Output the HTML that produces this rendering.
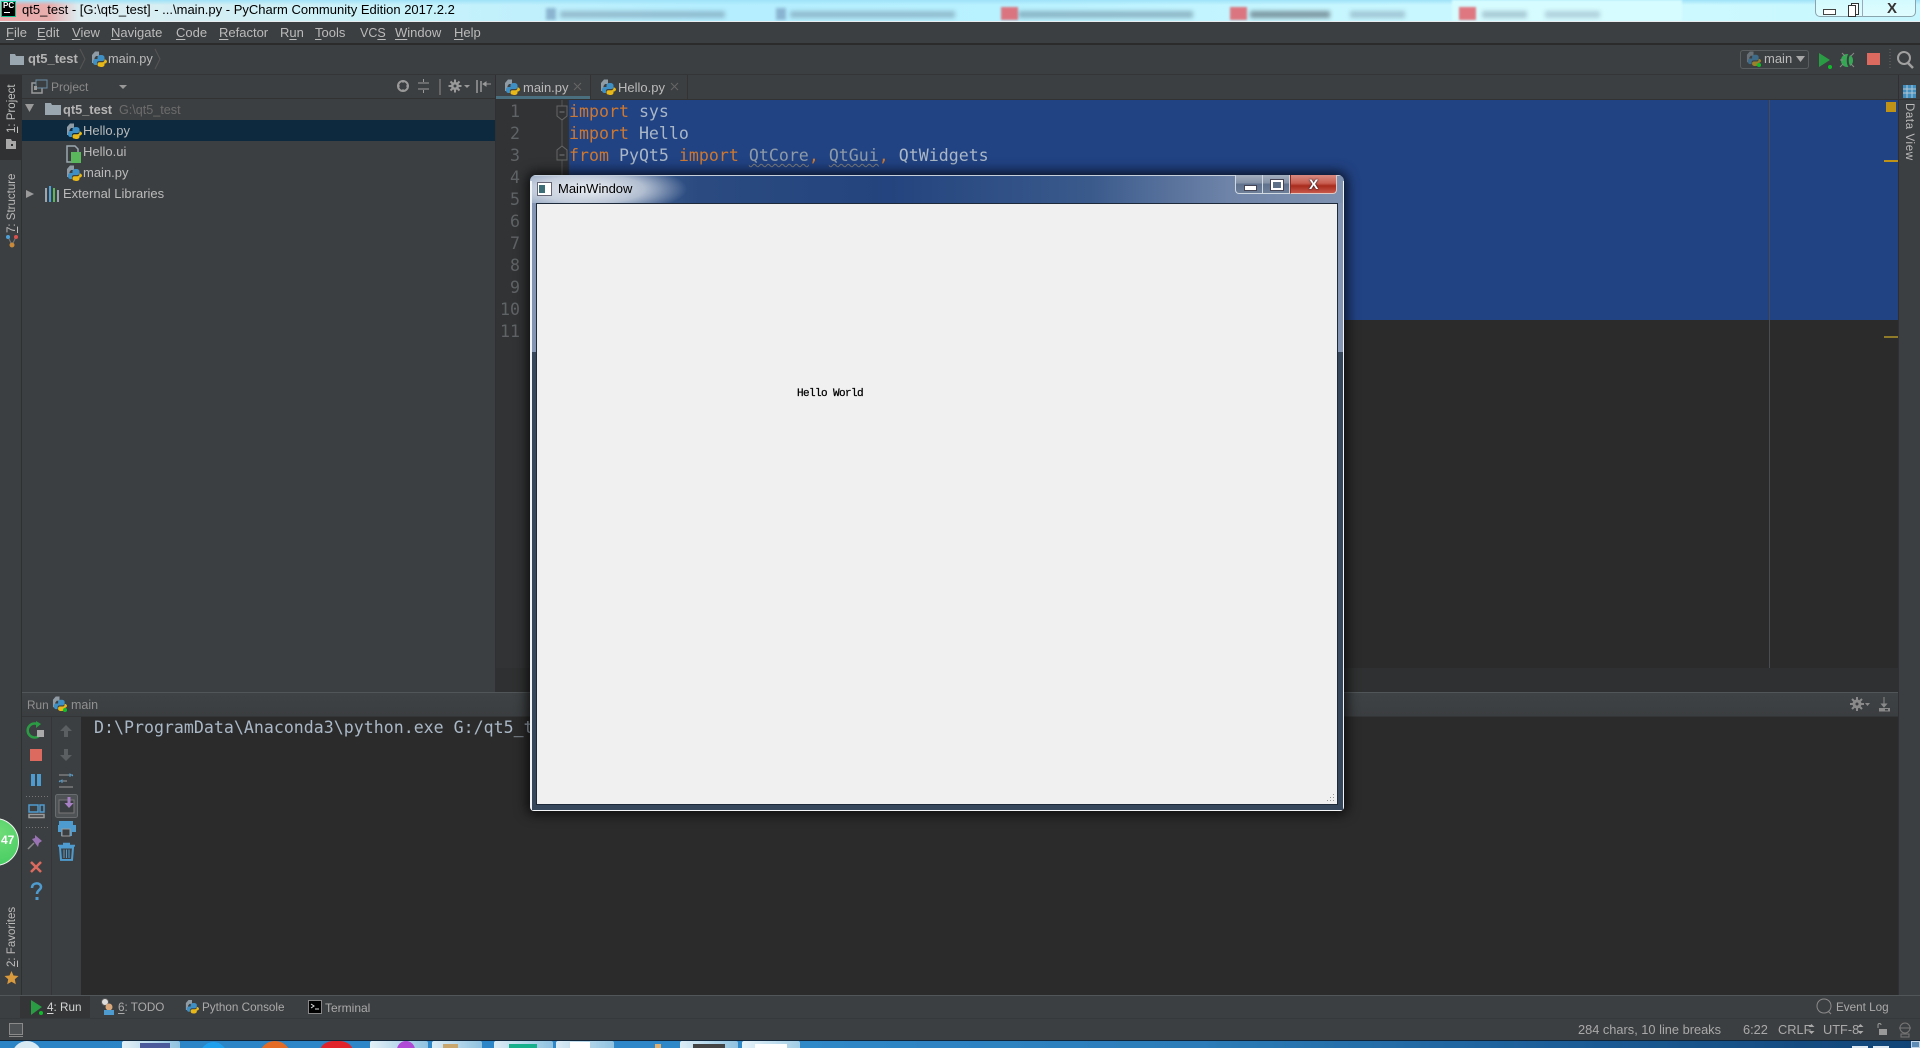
<!DOCTYPE html>
<html><head><meta charset="utf-8"><title>PyCharm</title>
<style>
html,body{margin:0;padding:0;width:1920px;height:1048px;overflow:hidden;background:#3c3f41}
.a,.t{position:absolute}
.t{white-space:pre;font-family:"Liberation Sans",sans-serif;font-size:13px;line-height:16px;color:#bbb}
.m{font-family:"DejaVu Sans Mono","Liberation Mono",monospace;font-size:16.6px;line-height:22px;color:#a9b7c6}
.k{color:#cc7832}
u{text-underline-offset:2px}
.wav{text-decoration:underline wavy #808080 1px;text-underline-offset:2px;color:#8d9aa8}
svg{position:absolute;overflow:visible}
.v{transform-origin:0 0;transform:rotate(-90deg)}
.v2{transform-origin:0 0;transform:rotate(90deg)}
</style></head>
<body>
<svg width="0" height="0" style="position:absolute">
<defs>
<symbol id="py" viewBox="0 0 16 16" overflow="visible">
<path d="M1 4 4 0.5H8V5H5L3.5 7V12H1Z" fill="#8f9ba5"/>
<path d="M10 4c-2.500 0-3.500 1-3.500 2.500V8H4.500C3 8 2 9.200 2 11s1 3 2.500 3H6v-2c0-1.200 .8-2 2-2h3.500c1.200 0 2-.8 2-2V6.500C13.500 5 12.300 4 10 4z" fill="#3e8fc4"/>
<path d="M14 8.500h-0.500V9c0 1.500-1 2.200-2.200 2.200H8.500C7.300 11.200 6.500 12 6.500 13v.8C6.500 15.300 8 16 10 16c2.500 0 3.500-1 3.500-2.300V12.500h.5c1.300 0 2-1.500 2-2s-.7-2-2-2z" fill="#e8b818"/>
</symbol>
</defs>
</svg>

<!-- Aero title strip -->
<div class="a" style="left:0;top:0;width:1920px;height:21px;background:linear-gradient(90deg,#e9a9a8 0,#e8aeae 50px,#dcecf0 78px,#c8f2fa 400px,#b4eeff 700px,#b8f1ff 1000px,#c6f6ff 1300px,#ccf9ff 1700px,#c8f6ff 1920px);overflow:hidden">
  <div class="a" style="left:0;top:0;width:1920px;height:5px;background:linear-gradient(#9fe2f8,rgba(170,235,255,0))"></div>
  <div class="a" style="left:1452px;top:0;width:230px;height:21px;background:#d6fcff;filter:blur(1px)"></div>
  <div class="a" style="left:560px;top:11px;width:165px;height:7px;background:#6b8aa0;filter:blur(2.500px);opacity:.5"></div>
  <div class="a" style="left:790px;top:11px;width:165px;height:7px;background:#6b8aa0;filter:blur(2.500px);opacity:.5"></div>
  <div class="a" style="left:1018px;top:11px;width:175px;height:7px;background:#5c7a8e;filter:blur(2.500px);opacity:.5"></div>
  <div class="a" style="left:1250px;top:11px;width:80px;height:7px;background:#54646f;filter:blur(2.500px);opacity:.65"></div>
  <div class="a" style="left:1350px;top:11px;width:55px;height:7px;background:#7a98ab;filter:blur(2.500px);opacity:.5"></div>
  <div class="a" style="left:1482px;top:11px;width:45px;height:7px;background:#7a98ab;filter:blur(2.500px);opacity:.5"></div>
  <div class="a" style="left:1545px;top:11px;width:55px;height:7px;background:#8aa8bb;filter:blur(2.500px);opacity:.5"></div>
  <div class="a" style="left:1001px;top:7px;width:17px;height:13px;background:#e0606a;filter:blur(1px);opacity:.85"></div>
  <div class="a" style="left:1230px;top:7px;width:17px;height:13px;background:#e0606a;filter:blur(1px);opacity:.85"></div>
  <div class="a" style="left:1459px;top:7px;width:17px;height:13px;background:#e0606a;filter:blur(1px);opacity:.85"></div>
  <div class="a" style="left:546px;top:8px;width:10px;height:12px;background:#7fa6c6;filter:blur(1.500px);opacity:.8"></div>
  <div class="a" style="left:776px;top:8px;width:10px;height:12px;background:#7fa6c6;filter:blur(1.500px);opacity:.8"></div>
  <div class="a" style="left:1815px;top:-2px;width:101px;height:19px;border:1px solid #8aa4ad;border-radius:0 0 5px 5px;box-sizing:border-box;background:linear-gradient(#d2fbff,#e0fcff)"></div>
  <div class="a" style="left:1862px;top:0;width:1px;height:17px;background:#9ab"></div>
</div>
<div class="a" style="left:0;top:21px;width:1920px;height:1px;background:#e8eef0"></div>
<div class="a" style="left:1823px;top:9px;width:11px;height:4px;background:#fff;border:1px solid #444"></div>
<div class="a" style="left:1851px;top:3px;width:6px;height:10px;background:#fff;border:1px solid #333"></div>
<div class="a" style="left:1848px;top:5px;width:6px;height:10px;background:#fff;border:1px solid #333"></div>
<div class="t" style="left:1887px;top:1px;font-weight:bold;font-size:15px;color:#333;text-shadow:0 0 1px #fff">X</div>

<!-- PC logo -->
<div class="a" style="left:1px;top:1px;width:15px;height:16px;background:#000;border:1px solid #12c492;box-sizing:border-box"></div>
<div class="t" style="left:3px;top:1px;font-size:8px;line-height:10px;font-weight:bold;color:#fff">PC</div>
<div class="a" style="left:4px;top:12px;width:6px;height:1px;background:#fff"></div>
<div class="t" style="left:22px;top:2px;color:#000;font-size:13px">qt5_test - [G:\qt5_test] - ...\main.py - PyCharm Community Edition 2017.2.2</div>

<!-- Menu -->
<div class="a" style="left:0;top:43px;width:1920px;height:2px;background:#2b2b2b"></div>
<div class="t" style="left:6px;top:25px"><u>F</u>ile</div>
<div class="t" style="left:37px;top:25px"><u>E</u>dit</div>
<div class="t" style="left:72px;top:25px"><u>V</u>iew</div>
<div class="t" style="left:111px;top:25px"><u>N</u>avigate</div>
<div class="t" style="left:176px;top:25px"><u>C</u>ode</div>
<div class="t" style="left:219px;top:25px"><u>R</u>efactor</div>
<div class="t" style="left:280px;top:25px">R<u>u</u>n</div>
<div class="t" style="left:315px;top:25px"><u>T</u>ools</div>
<div class="t" style="left:360px;top:25px;font-size:12.500px">VC<u>S</u></div>
<div class="t" style="left:395px;top:25px"><u>W</u>indow</div>
<div class="t" style="left:454px;top:25px"><u>H</u>elp</div>

<!-- Breadcrumb -->
<div class="a" style="left:0;top:74px;width:1920px;height:1px;background:#333536"></div>
<svg style="left:0;top:45px" width="200" height="29">
<path d="M10 9h5l1 2h8v9H10z" fill="#9aa7b0"/>
<path d="M80 4l5 10-5 10M155 4l5 10-5 10" fill="none" stroke="#555" stroke-width="1"/>
<use href="#py" x="91" y="6" width="16" height="16"/>
</svg>
<div class="t" style="left:28px;top:51px;font-weight:bold;color:#b4b4b4">qt5_test</div>
<div class="t" style="left:108px;top:51px;font-size:12.800px">main.py</div>

<!-- Run toolbar top right -->
<div class="a" style="left:1740px;top:50px;width:69px;height:19px;border:1px solid #5a5d5f;border-radius:3px;box-sizing:border-box"></div>
<svg style="left:1740px;top:45px" width="180" height="29">
<use href="#py" x="6" y="6" width="15" height="15" opacity=".55"/>
<circle cx="19" cy="20" r="2" fill="#0fbd2b"/>
<path d="M56 11h9l-4.500 6z" fill="#a8a8a8"/>
<path d="M79 8l11 7-11 7z" fill="#2a9c43"/>
<circle cx="90" cy="22" r="2" fill="#0fbd2b"/>
<ellipse cx="107" cy="15.500" rx="6" ry="6.500" fill="#34a853"/>
<path d="M110 9c-3 2-3 11 0 13" fill="none" stroke="#3c3f41" stroke-width="2"/>
<path d="M102 8l3 3M114 8l-3 3M100 15h3M100 22l3-3M114 22l-3-3" stroke="#8a8a8a" stroke-width="1"/>
<rect x="127" y="8" width="13" height="12" fill="#dd6a5f"/>
<path d="M150 4v21" stroke="#666" stroke-dasharray="1 2"/>
<circle cx="164" cy="13" r="6" fill="none" stroke="#a0a0a0" stroke-width="2"/>
<path d="M168 18l5 5" stroke="#a0a0a0" stroke-width="2.500"/>
</svg>
<div class="t" style="left:1764px;top:51px">main</div>

<!-- Left stripe -->
<div class="a" style="left:21px;top:75px;width:1px;height:920px;background:#2e3031"></div>
<div class="a" style="left:0;top:75px;width:21px;height:85px;background:#2f3132"></div>
<div class="t v" style="left:4px;top:133px;font-size:11.500px;line-height:16px;color:#c0c0c0"><u>1</u>: Project</div>
<div class="t v" style="left:4px;top:233px;font-size:11.500px;line-height:16px"><u>7</u>: Structure</div>
<div class="t v" style="left:4px;top:967px;font-size:11.500px;line-height:16px"><u>2</u>: Favorites</div>
<svg style="left:0;top:0" width="22" height="1000">
<path d="M6 139h5l1 2h4v8H6z" fill="#a8a8a8"/><rect x="11" y="144" width="2" height="2" fill="#2f3132"/>
<path d="M8 237l4 8 4-8" fill="none" stroke="#777"/><circle cx="8" cy="237" r="2" fill="#4ea0d8"/><circle cx="16" cy="237" r="2" fill="#d8534f"/><circle cx="12" cy="245" r="2.500" fill="#c98a3b"/>
<path d="M11.500 971l2 4.500 5 .5-3.700 3.300 1 5-4.300-2.600-4.300 2.600 1-5L4.500 976l5-.5z" fill="#d99a3d"/>
</svg>

<!-- Project panel -->
<div class="a" style="left:22px;top:98px;width:474px;height:1px;background:#323232"></div>
<div class="a" style="left:495px;top:75px;width:1px;height:617px;background:#2e3031"></div>
<div class="a" style="left:22px;top:120px;width:473px;height:21px;background:#0d293e"></div>
<svg style="left:22px;top:75px" width="474" height="140">
<rect x="10" y="8" width="10" height="10" fill="none" stroke="#9a9a9a" stroke-width="1.500"/><rect x="14" y="5" width="11" height="8" fill="#3c3f41" stroke="#6a8ca8"/><rect x="12" y="11" width="3" height="4" fill="#9a9a9a"/>
<path d="M97 10h8l-4 4z" fill="#999"/>
<circle cx="381" cy="11" r="5" fill="none" stroke="#9a9a9a" stroke-width="2"/><path d="M381 5v3M381 14v3M375 11h3M384 11h3" stroke="#9a9a9a"/>
<path d="M396 8h11M396 14h11M401.500 4v3M401.500 18v-3" stroke="#9a9a9a" fill="none"/>
<path d="M418 4v16" stroke="#666" stroke-width="2"/>
<path d="M433 4.500v13M426.500 11h13M428.500 6.500l9 9M437.500 6.500l-9 9" stroke="#9a9a9a" stroke-width="2"/><circle cx="433" cy="11" r="4" fill="#9a9a9a"/><circle cx="433" cy="11" r="1.500" fill="#3c3f41"/>
<path d="M442 10h6l-3 3z" fill="#9a9a9a"/>
<path d="M455 5v13M459 6v11" stroke="#9a9a9a" stroke-width="1.500" fill="none"/><path d="M461 9h8M461 9l3-2v4z" stroke="#9a9a9a" fill="#9a9a9a"/>
<path d="M4 30h9l-4.500 8z" fill="#9a9a9a" transform="translate(-1 -1)"/>
<path d="M23 28h6l1 2h9v10H23z" fill="#9aa7b0"/>
<use href="#py" x="44" y="48" width="16" height="16"/>
<path d="M45 71h8l3 3v13H45z" fill="none" stroke="#9aa7b0" stroke-width="1.500"/>
<rect x="49" y="77" width="10" height="11" fill="#5bb75b"/>
<use href="#py" x="44" y="90" width="16" height="16"/>
<path d="M4 115l8 4-8 4z" fill="#9a9a9a"/>
<path d="M24 113v14M28 111v16M32 113v14M36 115v12" stroke-width="2" fill="none" stroke="#9aa7b0"/><path d="M28 111v16" stroke="#4ea0d8" stroke-width="2"/><path d="M32 113v14" stroke="#5bb75b" stroke-width="2"/>
</svg>
<div class="t" style="left:51px;top:79px;color:#8a8a8a;font-size:12px">Project</div>
<div class="t" style="left:63px;top:102px;font-weight:bold;color:#b4b4b4;font-size:12.800px">qt5_test</div>
<div class="t" style="left:119px;top:102px;color:#6c6c6c;font-size:12.600px">G:\qt5_test</div>
<div class="t" style="left:83px;top:123px">Hello.py</div>
<div class="t" style="left:83px;top:144px">Hello.ui</div>
<div class="t" style="left:83px;top:165px">main.py</div>
<div class="t" style="left:63px;top:186px">External Libraries</div>

<!-- Tabs -->
<div class="a" style="left:496px;top:75px;width:94px;height:24px;background:#3f4244;box-sizing:border-box;border-bottom:3px solid #4a7080"></div>
<div class="a" style="left:590px;top:75px;width:1px;height:24px;background:#333"></div>
<div class="a" style="left:687px;top:75px;width:1px;height:24px;background:#333"></div>
<div class="a" style="left:496px;top:99px;width:1424px;height:1px;background:#323232"></div>
<svg style="left:500px;top:78px" width="200" height="20">
<use href="#py" x="4" y="1" width="16" height="16"/>
<use href="#py" x="100" y="1" width="16" height="16"/>
<path d="M74 5l7 7M81 5l-7 7M171 5l7 7M178 5l-7 7" stroke="#666" stroke-width="1"/>
</svg>
<div class="t" style="left:523px;top:80px">main.py</div>
<div class="t" style="left:618px;top:80px">Hello.py</div>

<!-- Editor -->
<div class="a" style="left:496px;top:100px;width:73px;height:568px;background:#313335"></div>
<div class="a" style="left:569px;top:100px;width:1329px;height:568px;background:#2b2b2b"></div>
<div class="a" style="left:569px;top:100px;width:1329px;height:220px;background:#214283"></div>
<div class="a" style="left:1769px;top:100px;width:1px;height:568px;background:#4a4d50"></div>
<div class="a" style="left:496px;top:668px;width:1403px;height:24px;background:#2f3031"></div>
<div class="a" style="left:1898px;top:75px;width:1px;height:920px;background:#2e3031"></div>
<svg style="left:490px;top:100px" width="90" height="120">
<path d="M72 0v100" stroke="#555" stroke-width="1"/>
<path d="M67 6h10v10l-5 4-5-4z" fill="#313335" stroke="#666"/><path d="M69.500 12h5" stroke="#777"/>
<path d="M72 46l5 4v10H67V50z" fill="#313335" stroke="#666"/><path d="M69.500 55h5" stroke="#777"/>
</svg>
<div class="t m" style="left:490px;top:101px;width:30px;text-align:right;color:#606366">1
2
3
4
5
6
7
8
9
10
11</div>
<div class="t m" style="left:569px;top:101px"><span class="k">import</span> sys
<span class="k">import</span> Hello
<span class="k">from</span> PyQt5 <span class="k">import</span> <span class="wav">QtCore</span><span class="k">,</span> <span class="wav">QtGui</span><span class="k">,</span> QtWidgets</div>
<div class="a" style="left:1886px;top:102px;width:10px;height:10px;background:#be9117"></div>
<div class="a" style="left:1884px;top:160px;width:14px;height:2px;background:#be9117"></div>
<div class="a" style="left:1884px;top:336px;width:14px;height:2px;background:#8f7a2a"></div>

<!-- Right stripe -->
<svg style="left:1902px;top:85px" width="16" height="14">
<rect x="1" y="0" width="13" height="13" fill="#3f8fc0"/>
<path d="M1 4h13M1 8h13M5 0v13M10 0v13" stroke="#b5c5cf" stroke-width="1"/>
</svg>
<div class="t v2" style="left:1917px;top:103px;font-size:11.500px;line-height:16px;letter-spacing:.6px">Data View</div>

<!-- Run panel -->
<div class="a" style="left:22px;top:692px;width:1876px;height:1px;background:#515658"></div>
<div class="a" style="left:22px;top:693px;width:1876px;height:23px;background:linear-gradient(#3e4244,#3b3e40)"></div>
<div class="a" style="left:22px;top:716px;width:1876px;height:1px;background:#333536"></div>
<div class="a" style="left:22px;top:717px;width:59px;height:278px;background:#3c3f41"></div>
<div class="a" style="left:51px;top:717px;width:1px;height:278px;background:#333536"></div>
<div class="a" style="left:81px;top:717px;width:1817px;height:278px;background:#2b2b2b"></div>
<div class="t" style="left:27px;top:697px;color:#909090;font-size:11.800px">Run</div>
<div class="t" style="left:71px;top:697px;color:#909090;font-size:12.500px">main</div>
<svg style="left:0;top:690px" width="90" height="220">
<use href="#py" x="52" y="6" width="15" height="15"/><circle cx="65" cy="20" r="2" fill="#0fbd2b"/>
<path d="M42 35a7 7 0 1 0 0 11" fill="none" stroke="#2a9c43" stroke-width="2.500" transform="translate(-3 0)"/><path d="M36 31v7l5-4z" fill="#2a9c43"/>
<rect x="37" y="40" width="7" height="7" fill="#aaa"/>
<rect x="30" y="59" width="12" height="12" fill="#dd6a5f"/>
<path d="M31 84h4v12h-4zM37 84h4v12h-4z" fill="#4e9ccf"/>
<path d="M26 106.500h22" stroke="#777" stroke-dasharray="1 2"/>
<path d="M29 115h9v7h-9zM40 115h4v7h-4z" fill="none" stroke="#4e9ccf" stroke-width="1.500"/><path d="M29 124.500h15v3H29z" fill="none" stroke="#9a9a9a" stroke-width="1.500"/>
<path d="M26 137.500h22" stroke="#777" stroke-dasharray="1 2"/>
<path d="M35 145l7 6-3 2-1 4-6-8 3-1z" fill="#9a73b5"/><path d="M34 153l-6 6" stroke="#888" stroke-width="1.500"/>
<path d="M31 172l10 10M41 172l-10 10" stroke="#dd6a5f" stroke-width="2.500"/>
<path d="M32 198c0-6 9-6 9-1 0 3-4 3-4 7" fill="none" stroke="#4e9ccf" stroke-width="2.500"/><rect x="35.500" y="207" width="3" height="3" fill="#4e9ccf"/>
<path d="M66 35l6 6h-4v6h-4v-6h-4z" fill="#5c5f61"/>
<path d="M66 71l6-6h-4v-6h-4v6h-4z" fill="#5c5f61"/>
<path d="M59 85h14M59 91h8M59 97h14" stroke="#9a9a9a" fill="none"/><path d="M70 87v-3l3 2M62 93v-3l-3 2" stroke="#4e9ccf" fill="none"/>
<rect x="55.500" y="104.500" width="22" height="23" rx="2" fill="#4e5254" stroke="#6a6d6f"/><rect x="59" y="110" width="15" height="13" fill="#3c3f41" stroke="#777"/><path d="M69 107v9" stroke="#a77fc4" stroke-width="3" fill="none"/><path d="M64.500 113l4.500 5 4.500-5z" fill="#a77fc4"/>
<g transform="translate(0 -5)"><path d="M59 140v-4h14v4h3v7h-4v4H61v-4h-3v-7z" fill="#4e9ccf"/><rect x="62" y="144" width="8" height="7" fill="#3c3f41" stroke="#9a9a9a"/></g>
<g transform="translate(0 -3) scale(1 .95) translate(0 6)"><path d="M60 163h13l-1 13H61zM58 161h17M63 159h7" fill="none" stroke="#4e9ccf" stroke-width="2"/><path d="M64 165v9M66.500 165v9M69 165v9" stroke="#4e9ccf"/></g>
</svg>
<div class="t m" style="left:94px;top:717px">D:\ProgramData\Anaconda3\python.exe G:/qt5_test/main.py</div>
<svg style="left:1850px;top:695px" width="50" height="20">
<path d="M7 2v14M0 9h14M2 4l10 10M12 4L2 14" stroke="#8a8a8a" stroke-width="2"/><circle cx="7" cy="9" r="4.500" fill="#8a8a8a"/><circle cx="7" cy="9" r="1.500" fill="#3c3f41"/>
<path d="M15 8h5l-2.500 3z" fill="#8a8a8a"/>
<path d="M34 2v9M31.500 9l2.500 3 2.500-3z" stroke="#8a8a8a" fill="#8a8a8a"/><rect x="29" y="13" width="11" height="3.500" fill="#8a8a8a"/><rect x="35" y="14" width="3" height="1.500" fill="#3c3f41"/>
</svg>

<!-- Bottom tool bar -->
<div class="a" style="left:0;top:995px;width:1920px;height:1px;background:#515658"></div>
<div class="a" style="left:0;top:1018px;width:1920px;height:1px;background:#36393b"></div>
<div class="a" style="left:20px;top:996px;width:70px;height:22px;background:#333537"></div>
<svg style="left:0;top:996px" width="340" height="22">
<path d="M31 4l11 7-11 8z" fill="#2a9c43"/><circle cx="41" cy="17" r="2" fill="#0fbd2b"/>
<circle cx="105" cy="6" r="3.500" fill="#ddd" stroke="#555"/><circle cx="109" cy="11" r="3.500" fill="#d9a87c"/><rect x="104" y="14" width="10" height="5" fill="#4e9ccf"/>
<use href="#py" x="185" y="3" width="14" height="15"/>
<rect x="308.500" y="4.500" width="13" height="13" fill="#000" stroke="#888"/><path d="M311 8l3 2-3 2M315 13h4" stroke="#ddd" fill="none"/>
</svg>
<div class="t" style="left:47px;top:1000px;color:#d6d6d6;font-size:11.700px"><u>4</u>: Run</div>
<div class="t" style="left:118px;top:1000px;font-size:11.700px;color:#aaa"><u>6</u>: TODO</div>
<div class="t" style="left:202px;top:1000px;font-size:11.700px;color:#aaa">Python Console</div>
<div class="t" style="left:325px;top:1000px;font-size:12px;color:#aaa">Terminal</div>
<svg style="left:1816px;top:998px" width="18" height="18">
<path d="M8 1c4 0 7 3 7 7s-3 7-7 7c-4 0-7-3-7-7s3-7 7-7z M12 13l3 3" fill="none" stroke="#8a8a8a"/>
</svg>
<div class="t" style="left:1836px;top:1000px;font-size:11.700px;color:#aaa">Event Log</div>

<!-- Status bar -->
<div class="a" style="left:9px;top:1023px;width:12px;height:10px;background:#4e5254;border:1px solid #8a8a8a"></div>
<div class="a" style="left:9px;top:1036px;width:14px;height:1px;background:#8a8a8a"></div>
<div class="t" style="left:1578px;top:1022px;color:#a9a9a9;font-size:12.800px">284 chars, 10 line breaks</div>
<div class="t" style="left:1743px;top:1022px;color:#a9a9a9;font-size:12.800px">6:22</div>
<div class="t" style="left:1778px;top:1022px;color:#a9a9a9;font-size:12.800px">CRLF</div>
<div class="t" style="left:1823px;top:1022px;color:#a9a9a9;font-size:12.800px">UTF-8</div>
<svg style="left:1800px;top:1020px" width="120" height="20">
<path d="M8.500 7l3-3 3 3zM8.500 11l3 3 3-3z" fill="#a9a9a9"/>
<path d="M57.500 7l3-3 3 3zM57.500 11l3 3 3-3z" fill="#a9a9a9"/>
<rect x="79" y="9" width="8" height="6" fill="#999"/><path d="M78 8V5c0-2 3-2 3 0" fill="none" stroke="#999"/>
<circle cx="105" cy="8" r="5" fill="none" stroke="#777"/><path d="M99 8h12M101 14h8v3h-8z" stroke="#777" fill="none"/>
</svg>

<!-- Taskbar -->
<div class="a" style="left:0;top:1041px;width:1920px;height:7px;background:linear-gradient(90deg,#2a84c6,#2f88c8 800px,#2b7cb8 1200px,#1a5a94 1600px,#114476);overflow:hidden">
  <div class="a" style="left:12px;top:0;width:30px;height:30px;border-radius:50%;background:#d7e9f3"></div>
  <div class="a" style="left:122px;top:0;width:58px;height:8px;background:linear-gradient(90deg,#e3f0f7,#8fc2e0);border-radius:2px 2px 0 0"></div>
  <div class="a" style="left:140px;top:2px;width:30px;height:6px;background:#4a5a9a"></div>
  <div class="a" style="left:200px;top:1px;width:27px;height:27px;border-radius:50%;background:#1fa0ee"></div>
  <div class="a" style="left:260px;top:0;width:30px;height:27px;border-radius:50%;background:#e46b24"></div>
  <div class="a" style="left:320px;top:0;width:33px;height:27px;border-radius:40%;background:#e2232b"></div>
  <div class="a" style="left:370px;top:0;width:58px;height:8px;background:linear-gradient(90deg,#e3f0f7,#8fc2e0);border-radius:2px 2px 0 0"></div>
  <div class="a" style="left:397px;top:0;width:18px;height:18px;border-radius:50%;background:#b04ad6"></div>
  <div class="a" style="left:432px;top:0;width:50px;height:8px;background:linear-gradient(90deg,#dcecf5,#8fc2e0);border-radius:2px 2px 0 0"></div>
  <div class="a" style="left:443px;top:3px;width:15px;height:6px;background:#c9a66b"></div>
  <div class="a" style="left:494px;top:0;width:59px;height:8px;background:linear-gradient(90deg,#dcecf5,#8fc2e0);border-radius:2px 2px 0 0"></div>
  <div class="a" style="left:509px;top:3px;width:28px;height:6px;background:#16b08c"></div>
  <div class="a" style="left:556px;top:0;width:58px;height:8px;background:linear-gradient(90deg,#dcecf5,#8fc2e0);border-radius:2px 2px 0 0"></div>
  <div class="a" style="left:570px;top:1px;width:20px;height:7px;background:#fff"></div>
  <div class="a" style="left:655px;top:3px;width:6px;height:6px;background:#e0b070"></div>
  <div class="a" style="left:680px;top:0;width:58px;height:8px;background:linear-gradient(90deg,#dcecf5,#8fc2e0);border-radius:2px 2px 0 0"></div>
  <div class="a" style="left:693px;top:3px;width:32px;height:6px;background:#444"></div>
  <div class="a" style="left:742px;top:0;width:58px;height:8px;background:linear-gradient(90deg,#e8f3f9,#a0cde6);border-radius:2px 2px 0 0"></div>
  <div class="a" style="left:755px;top:3px;width:32px;height:6px;background:#fff"></div>
  <div class="a" style="left:1852px;top:5px;width:16px;height:2px;background:#dfe9f2"></div>
  <div class="a" style="left:1873px;top:5px;width:16px;height:2px;background:#dfe9f2"></div>
  <div class="a" style="left:1911px;top:0;width:9px;height:7px;background:#5f8cb4;border:1px solid #c4d6e6;box-sizing:border-box"></div>
</div>
<div class="a" style="left:0;top:1040px;width:1920px;height:1px;background:#10243a"></div>

<!-- MainWindow -->
<div class="a" style="left:530px;top:175px;width:814px;height:636px;border-radius:6px 6px 4px 4px;box-shadow:0 0 12px 3px rgba(0,0,0,.75);background:#36475c;overflow:hidden;outline:0">
  <div class="a" style="left:0;top:0;width:814px;height:28px;background:linear-gradient(90deg,#8599b8 0,#43628f 90px,#2a4a80 170px,#23447e 360px,#3a5a8c 560px,#6f84a8 700px,#7f92b0 814px)"></div>
  <div class="a" style="left:0;top:0;width:200px;height:28px;background:radial-gradient(ellipse 95px 26px at 62px 14px,rgba(255,255,255,.88) 0,rgba(255,255,255,.6) 55%,rgba(255,255,255,0) 100%)"></div>
  <div class="a" style="left:0;top:28px;width:6px;height:149px;background:#8395b2"></div>
  <div class="a" style="right:0;top:28px;width:7px;height:149px;background:#8395b2"></div>
  <div class="a" style="left:0;top:0;right:0;height:1px;background:#c6d0dd"></div>
  <div class="a" style="left:0;bottom:0;right:0;height:1.500px;background:#f4f6f8"></div>
  <div class="a" style="right:0;top:6px;bottom:0;width:1.500px;background:#f0f3f6"></div>
  <div class="a" style="left:0;top:6px;bottom:0;width:1.500px;background:#f0f3f6"></div>
  <div class="a" style="left:7px;top:7px;width:13px;height:12px;background:#fff;border:1px solid #667"></div>
  <div class="a" style="left:9px;top:10px;width:6px;height:8px;background:#3d6e78"></div>
  <div class="t" style="left:28px;top:6px;color:#000;font-size:13px">MainWindow</div>
  <!-- buttons -->
  <div class="a" style="left:705px;top:0;width:28px;height:19px;box-sizing:border-box;border:1px solid #d0d8e2;border-top:0;border-radius:0 0 0 4px;background:linear-gradient(#a4afbf,#8391a6 45%,#5f718c 50%,#6d7f99)"></div>
  <div class="a" style="left:733px;top:0;width:27px;height:19px;box-sizing:border-box;border:1px solid #d0d8e2;border-top:0;border-left:0;background:linear-gradient(#a4afbf,#8391a6 45%,#5f718c 50%,#6d7f99)"></div>
  <div class="a" style="left:760px;top:0;width:47px;height:19px;box-sizing:border-box;border:1px solid #e0c8c4;border-top:0;border-left:1px solid #8c2a20;border-radius:0 0 4px 0;background:linear-gradient(#d88a80,#c95f52 45%,#a92c1e 60%,#c6584a)"></div>
  <div class="a" style="left:714px;top:10px;width:11px;height:4px;background:#fff;border:1px solid #445"></div>
  <div class="a" style="left:741px;top:5px;width:8px;height:6px;background:#5e6f88;border:2px solid #fff;outline:1px solid #445"></div>
  <div class="t" style="left:779px;top:1px;font-weight:bold;font-size:14px;color:#fff;text-shadow:0 0 1px #223,0 0 2px #223">X</div>
  <!-- client -->
  <div class="a" style="left:7px;top:29px;width:800px;height:600px;background:#f0f0f0;outline:1px solid #1e2a3a">
    <div class="t" style="left:260px;top:183px;font-family:'Liberation Mono',monospace;font-size:11px;line-height:14px;letter-spacing:-.6px;color:#000;-webkit-text-stroke:.25px #000">Hello World</div>
    <svg style="right:2px;bottom:2px;left:auto;top:auto" width="8" height="8"><path d="M6 0h1v1H6zM3 3h1v1H3zM6 3h1v1H6zM0 6h1v1H0zM3 6h1v1H3zM6 6h1v1H6z" fill="#999"/></svg>
  </div>
</div>

<!-- Green badge -->
<div class="a" style="left:-29px;top:818px;width:46px;height:46px;border-radius:50%;background:radial-gradient(circle at 60% 30%,#6fdc78,#3cc95c);border:1.500px solid #f4f4f4"></div>
<div class="t" style="left:1px;top:832px;color:#fff;font-weight:bold;font-size:12px">47</div>
</body></html>
